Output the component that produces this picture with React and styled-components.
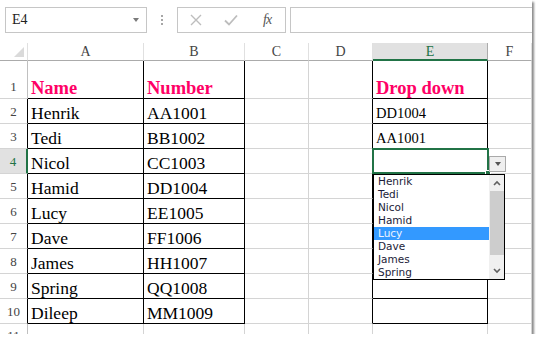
import React from 'react';
import styled, { createGlobalStyle } from 'styled-components';

const GRID = '#d4d4d4';
const INK = '#000';
const GREEN = '#217346';
const PINK = '#ff0066';

const GlobalStyle = createGlobalStyle`
  body {
    margin: 0;
    background: #fff;
    font-family: "Liberation Serif", "Times New Roman", serif;
  }
`;

const Frame = styled.div`
  width: 532px;
  height: 334px;
  overflow: hidden;
  background: #fff;
  box-shadow: 2px 2px 2px rgba(0, 0, 0, 0.45);
  display: flex;
  flex-direction: column;
`;

const FormulaBar = styled.div`
  flex: none;
  height: 43px;
  box-sizing: border-box;
  padding: 7px 0 0 5px;
  display: flex;
  align-items: flex-start;
`;

const NameBox = styled.div`
  width: 142px;
  height: 26px;
  box-sizing: border-box;
  border: 1px solid #c6c6c6;
  padding: 0 7px 0 6px;
  display: flex;
  align-items: center;
  justify-content: space-between;
  font-size: 14px;
  color: #222;
`;

const Caret = styled.span`
  width: 0;
  height: 0;
  border-left: 3.5px solid transparent;
  border-right: 3.5px solid transparent;
  border-top: 4px solid #7a7a7a;
`;

const Dots = styled.div`
  display: flex;
  flex-direction: column;
  gap: 2px;
  margin: 8px 14px 0 14px;

  span {
    width: 2px;
    height: 2px;
    background: #a6a6a6;
  }
`;

const FuncBox = styled.div`
  width: 109px;
  height: 26px;
  box-sizing: border-box;
  border: 1px solid #c6c6c6;
  display: grid;
  grid-template-columns: repeat(3, 1fr);
  align-items: center;
  justify-items: center;
`;

const Fx = styled.span`
  font-style: italic;
  font-size: 14px;
  color: #555;
  letter-spacing: -1px;
`;

const FormulaInput = styled.div`
  flex: 1;
  height: 26px;
  margin-left: 4px;
  box-sizing: border-box;
  border: 1px solid #c6c6c6;
  border-right: none;
`;

const Sheet = styled.div`
  flex: none;
  display: grid;
  grid-template-columns: 28px 116px 101px 64px 64px 115px 1fr;
  grid-template-rows: 18px 38px repeat(10, 25px);
`;

const Corner = styled.div`
  box-sizing: border-box;
  border-right: 1px solid #e0e0e0;
  border-bottom: 1px solid #ababab;
  display: flex;
  align-items: flex-end;
  justify-content: flex-end;
  padding: 0 3px 3px 0;

  &::after {
    content: '';
    width: 0;
    height: 0;
    border-left: 10px solid transparent;
    border-bottom: 10px solid #dadada;
  }
`;

const ColHead = styled.div`
  box-sizing: border-box;
  background: ${(p) => (p.$active ? '#e1e1e1' : '#fff')};
  border-right: 1px solid ${(p) => (p.$active ? '#ababab' : '#e0e0e0')};
  border-bottom: ${(p) => (p.$active ? `2px solid ${GREEN}` : '1px solid #ababab')};
  color: ${(p) => (p.$active ? GREEN : '#444')};
  font-size: 14px;
  display: flex;
  align-items: center;
  justify-content: center;
  padding-top: 1px;
`;

const RowHead = styled.div`
  box-sizing: border-box;
  background: ${(p) => (p.$active ? '#e1e1e1' : '#fff')};
  border-right: ${(p) => (p.$active ? `2px solid ${GREEN}` : `1px solid ${p.$right}`)};
  border-bottom: 1px solid ${GRID};
  color: ${(p) => (p.$active ? GREEN : '#444')};
  font-size: 13px;
  line-height: 20px;
  display: flex;
  align-items: ${(p) => (p.$partial ? 'flex-start' : 'flex-end')};
  justify-content: center;
  padding: ${(p) => (p.$partial ? '2px 0 0' : '0 0 1px')};
`;

const Cell = styled.div`
  position: relative;
  box-sizing: border-box;
  border-right: 1px solid ${(p) => p.$right || GRID};
  border-bottom: 1px solid ${(p) => p.$bottom || GRID};
  padding: 0 3px;
  display: flex;
  align-items: flex-end;
  white-space: nowrap;
  font-size: ${(p) => (p.$title ? '18.5px' : p.$small ? '14.5px' : '17.5px')};
  font-weight: ${(p) => (p.$title ? 700 : 400)};
  color: ${(p) => (p.$title ? PINK : '#000')};
  line-height: 20px;
`;

const Selection = styled.div`
  position: absolute;
  left: -1px;
  top: -1px;
  width: 117px;
  height: 26px;
  box-sizing: border-box;
  border: 2px solid ${GREEN};
  z-index: 2;

  &::after {
    content: '';
    position: absolute;
    right: -4px;
    bottom: -4px;
    width: 4px;
    height: 4px;
    background: ${GREEN};
    border: 1px solid #fff;
  }
`;

const DropButton = styled.div`
  position: absolute;
  left: 116px;
  top: 7px;
  width: 17px;
  height: 16px;
  box-sizing: border-box;
  background: #efefef;
  border: 1px solid #a9a9a9;
  display: flex;
  align-items: center;
  justify-content: center;
  z-index: 3;

  &::after {
    content: '';
    width: 0;
    height: 0;
    border-left: 3.5px solid transparent;
    border-right: 3.5px solid transparent;
    border-top: 4px solid #555;
  }
`;

const DropList = styled.div`
  position: absolute;
  left: 0;
  top: 25px;
  width: 132px;
  height: 106px;
  box-sizing: border-box;
  border: 1px solid #000;
  background: #fff;
  display: flex;
  z-index: 4;
`;

const Items = styled.div`
  flex: 1;
  display: flex;
  flex-direction: column;
`;

const Item = styled.div`
  height: 13px;
  line-height: 13px;
  padding-left: 4px;
  overflow: hidden;
  font-family: "DejaVu Sans", "Noto Sans", sans-serif;
  font-size: 10.5px;
  background: ${(p) => (p.$active ? '#3399ff' : 'transparent')};
  color: ${(p) => (p.$active ? '#eef4ff' : '#1c1c38')};
`;

const ScrollBar = styled.div`
  width: 15px;
  background: #f0f0f0;
  display: flex;
  flex-direction: column;
  align-items: center;
`;

const ScrollArrow = styled.div`
  height: 16px;
  width: 100%;
  display: flex;
  align-items: center;
  justify-content: center;
`;

const Thumb = styled.div`
  width: 14px;
  height: 64px;
  background: #cdcdcd;
`;

const Spacer = styled.div`
  flex: 1;
`;

const Chevron = ({ up }) => (
  <svg width="8" height="6" viewBox="0 0 8 6">
    <polyline
      points={up ? '1,5 4,2 7,5' : '1,1 4,4 7,1'}
      fill="none"
      stroke="#606060"
      strokeWidth="1.6"
    />
  </svg>
);

const cols = ['A', 'B', 'C', 'D', 'E', 'F'];

const rows = [
  ['Name', 'Number', 'Drop down'],
  ['Henrik', 'AA1001', 'DD1004'],
  ['Tedi', 'BB1002', 'AA1001'],
  ['Nicol', 'CC1003', ''],
  ['Hamid', 'DD1004', ''],
  ['Lucy', 'EE1005', ''],
  ['Dave', 'FF1006', ''],
  ['James', 'HH1007', ''],
  ['Spring', 'QQ1008', ''],
  ['Dileep', 'MM1009', ''],
  ['', '', ''],
];

const listNames = ['Henrik', 'Tedi', 'Nicol', 'Hamid', 'Lucy', 'Dave', 'James', 'Spring'];

const App = () => {
  return (
    <>
      <GlobalStyle />
      <Frame>
        <FormulaBar>
          <NameBox>
            <span>E4</span>
            <Caret />
          </NameBox>
          <Dots>
            <span />
            <span />
            <span />
          </Dots>
          <FuncBox>
            <svg width="12" height="12" viewBox="0 0 12 12">
              <path d="M1 1 L11 11 M11 1 L1 11" stroke="#bdbdbd" strokeWidth="1.4" />
            </svg>
            <svg width="14" height="12" viewBox="0 0 14 12">
              <path d="M1 6.5 L5 10.5 L13 1.5" fill="none" stroke="#bdbdbd" strokeWidth="1.8" />
            </svg>
            <Fx>fx</Fx>
          </FuncBox>
          <FormulaInput />
        </FormulaBar>

        <Sheet>
          <Corner />
          {cols.map((c) => (
            <ColHead key={c} $active={c === 'E'}>
              {c}
            </ColHead>
          ))}

          {rows.map(([a, b, e], i) => {
            const n = i + 1;
            const inTable = n <= 10;
            const title = n === 1;
            return (
              <React.Fragment key={n}>
                <RowHead
                  $active={n === 4}
                  $partial={n === 11}
                  $right={inTable && n > 1 ? INK : '#c0c0c0'}
                >
                  {n}
                </RowHead>
                <Cell $title={title} $right={inTable ? INK : null} $bottom={inTable ? INK : null}>
                  {a}
                </Cell>
                <Cell $title={title} $right={inTable ? INK : null} $bottom={inTable ? INK : null}>
                  {b}
                </Cell>
                <Cell />
                <Cell $right={inTable ? INK : null} />
                <Cell
                  $title={title}
                  $small={!title}
                  $right={inTable ? INK : null}
                  $bottom={inTable ? INK : null}
                >
                  {e}
                  {n === 4 && (
                    <>
                      <Selection />
                      <DropButton />
                      <DropList>
                        <Items>
                          {listNames.map((name) => (
                            <Item key={name} $active={name === 'Lucy'}>
                              {name}
                            </Item>
                          ))}
                        </Items>
                        <ScrollBar>
                          <ScrollArrow>
                            <Chevron up />
                          </ScrollArrow>
                          <Thumb />
                          <Spacer />
                          <ScrollArrow>
                            <Chevron />
                          </ScrollArrow>
                        </ScrollBar>
                      </DropList>
                    </>
                  )}
                </Cell>
                <Cell />
              </React.Fragment>
            );
          })}
        </Sheet>
      </Frame>
    </>
  );
};

export default App;
